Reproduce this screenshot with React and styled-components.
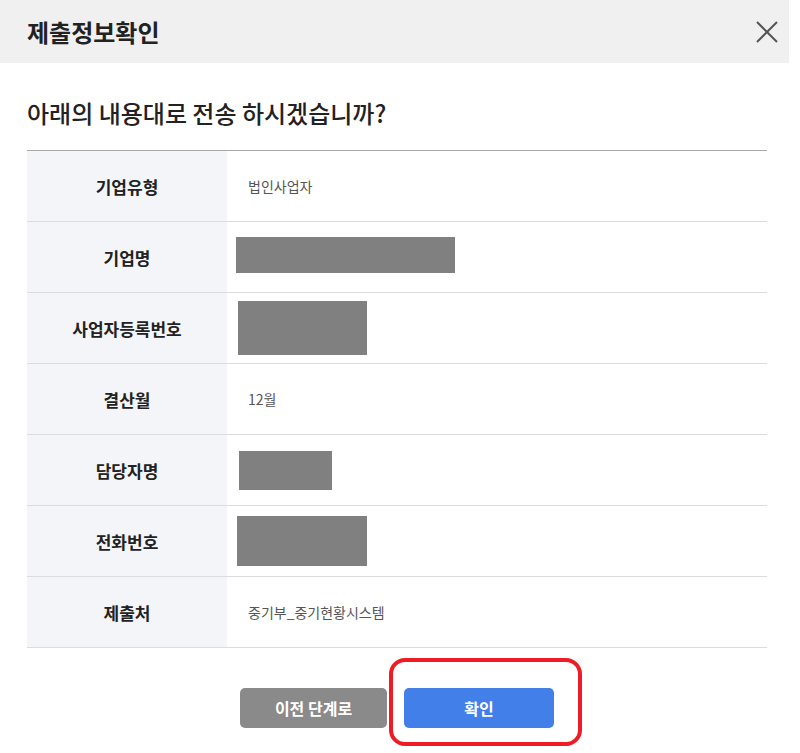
import React from "react";
import styled, { createGlobalStyle } from "styled-components";

const GlobalStyle = createGlobalStyle`
    html, body {
        margin: 0;
        padding: 0;
        background: #ffffff;
    }
    body {
        font-family: "Noto Sans CJK KR", "Noto Sans", sans-serif;
        color: #222;
    }
`;

const Modal = styled.div`
    width: 789px;
    min-height: 753px;
    background: #ffffff;
    display: flex;
    flex-direction: column;
`;

const Header = styled.div`
    height: 63px;
    background: #f0f0f0;
    display: flex;
    align-items: center;
    justify-content: space-between;
    padding: 0 11px 0 27px;
    box-sizing: border-box;
`;

const Title = styled.h1`
    margin: 0;
    font-size: 24px;
    font-weight: 700;
    color: #222;
`;

const CloseButton = styled.button`
    border: none;
    background: none;
    padding: 0;
    width: 22px;
    height: 22px;
    cursor: pointer;
    display: flex;
`;

const Body = styled.div`
    padding: 34px 22px 0 27px;
`;

const Question = styled.h2`
    margin: 0 0 21px;
    font-size: 24px;
    line-height: 32px;
    font-weight: 500;
    color: #222;
`;

const Table = styled.div`
    border-top: 1px solid #a8a8a8;
`;

const Row = styled.div`
    display: grid;
    grid-template-columns: 200px 1fr;
    height: 71px;
    border-bottom: 1px solid #dcdcdf;
    box-sizing: border-box;
`;

const Label = styled.div`
    background: #f4f5f9;
    display: flex;
    align-items: center;
    justify-content: center;
    font-size: 17px;
    font-weight: 700;
    color: #222;
`;

const Value = styled.div`
    display: flex;
    align-items: center;
    padding-left: ${p => p.$indent || 21}px;
    font-size: 14px;
    color: #555;
`;

const Redacted = styled.div`
    background: #808080;
    width: ${p => p.$w}px;
    height: ${p => p.$h}px;
    margin-top: ${p => p.$lift || 0}px;
`;

const Actions = styled.div`
    display: flex;
    justify-content: center;
    gap: 17px;
    margin-top: 40px;
`;

const Button = styled.button`
    height: 40px;
    width: ${p => p.$w}px;
    border: none;
    border-radius: 5px;
    background: ${p => (p.$primary ? "#427fe8" : "#8a8a8a")};
    color: #ffffff;
    font-family: inherit;
    font-size: 16px;
    font-weight: 700;
    cursor: pointer;
`;

const Highlight = styled.div`
    position: relative;
    display: flex;
`;

const HighlightRing = styled.div`
    position: absolute;
    left: -15px;
    top: -30px;
    right: -28px;
    bottom: -18px;
    border: 4px solid #ee1c25;
    border-radius: 16px;
    pointer-events: none;
`;

const rows = [
    { label: "기업유형", value: "법인사업자" },
    { label: "기업명", box: { w: 219, h: 36, indent: 9, lift: -5 } },
    { label: "사업자등록번호", box: { w: 129, h: 54, indent: 11 } },
    { label: "결산월", value: "12월" },
    { label: "담당자명", box: { w: 93, h: 39, indent: 12, lift: 1 } },
    { label: "전화번호", box: { w: 130, h: 50, indent: 10 } },
    { label: "제출처", value: "중기부_중기현황시스템" },
];

function CloseIcon() {
    return (
        <svg width="22" height="22" viewBox="0 0 22 22">
            <path
                d="M1 1 L21 21 M21 1 L1 21"
                stroke="#555"
                strokeWidth="2"
                fill="none"
            />
        </svg>
    );
}

export default function App() {
    return (
        <>
            <GlobalStyle />
            <Modal>
                <Header>
                    <Title>제출정보확인</Title>
                    <CloseButton aria-label="닫기">
                        <CloseIcon />
                    </CloseButton>
                </Header>
                <Body>
                    <Question>아래의 내용대로 전송 하시겠습니까?</Question>
                    <Table>
                        {rows.map(row => (
                            <Row key={row.label}>
                                <Label>{row.label}</Label>
                                {row.box ? (
                                    <Value $indent={row.box.indent}>
                                        <Redacted
                                            $w={row.box.w}
                                            $h={row.box.h}
                                            $lift={row.box.lift}
                                        />
                                    </Value>
                                ) : (
                                    <Value>{row.value}</Value>
                                )}
                            </Row>
                        ))}
                    </Table>
                    <Actions>
                        <Button $w={147}>이전 단계로</Button>
                        <Highlight>
                            <Button $w={150} $primary>
                                확인
                            </Button>
                            <HighlightRing />
                        </Highlight>
                    </Actions>
                </Body>
            </Modal>
        </>
    );
}
